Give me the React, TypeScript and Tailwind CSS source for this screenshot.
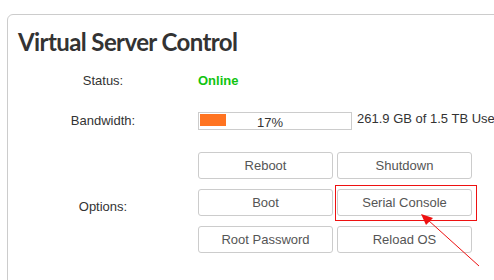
import React from 'react';

const buttons = ['Reboot', 'Shutdown', 'Boot', 'Serial Console', 'Root Password', 'Reload OS'];

const App: React.FC = () => {
  const used = 17;

  return (
    <div className="relative w-[494px] h-[280px] overflow-hidden bg-white font-['Liberation_Sans',Arial,sans-serif] text-[13px] text-[#333]">
      {/* Card */}
      <div className="ml-[7px] mt-[14px] w-[620px] h-[320px] border border-[#ccc] rounded-tl-[6px] px-[10px]">
        <h1 className="mt-[13px] text-[24px] leading-[28px] font-bold tracking-[-0.6px] text-[#333] font-['Lato','Open_Sans',sans-serif]">
          Virtual Server Control
        </h1>

        <div className="mt-[15px] grid grid-cols-[170px_1fr] gap-x-[10px]">
          {/* Status */}
          <div className="h-[20px] leading-[20px] text-center">Status:</div>
          <div className="h-[20px] leading-[20px] font-bold text-[#11c411]">Online</div>

          {/* Bandwidth */}
          <div className="mt-[20px] h-[20px] leading-[20px] text-center">Bandwidth:</div>
          <div className="mt-[20px] flex items-start gap-[5px] whitespace-nowrap">
            <div className="relative w-[154px] h-[18px] border border-[#ccc] p-[1px] mt-[1px]">
              <div className="h-[12px] bg-[#ff7320]" style={{ width: `${used}%` }}></div>
              <div className="absolute inset-0 flex items-center justify-center pr-[10px] leading-none pt-[2px]">
                {used}%
              </div>
            </div>
            <span className="leading-[16px]">261.9 GB of 1.5 TB Used</span>
          </div>

          {/* Options */}
          <div className="mt-[21px] flex items-center justify-center pt-[9px]">Options:</div>
          <div className="mt-[21px] grid grid-cols-[135px_135px] gap-x-[4px] gap-y-[10px]">
            {buttons.map((b) => (
              <div key={b} className="relative">
                <button className="w-[135px] h-[27px] border border-[#ccc] rounded-[3px] bg-white text-[#555] text-[13px]">
                  {b}
                </button>
                {b === 'Serial Console' && (
                  <div className="absolute -left-[2px] -top-[4px] -right-[5px] -bottom-[5px] border-[1.5px] border-[#ee1111] pointer-events-none"></div>
                )}
              </div>
            ))}
          </div>
        </div>
      </div>

      {/* Annotation arrow */}
      <svg className="absolute left-0 top-0 pointer-events-none" width="494" height="280" viewBox="0 0 494 280">
        <line x1="479" y1="266" x2="428" y2="220" stroke="#ee1111" strokeWidth="1" />
        <polygon points="421,214 433,218 426,225" fill="#ee1111" />
      </svg>
    </div>
  );
};

export default App;
